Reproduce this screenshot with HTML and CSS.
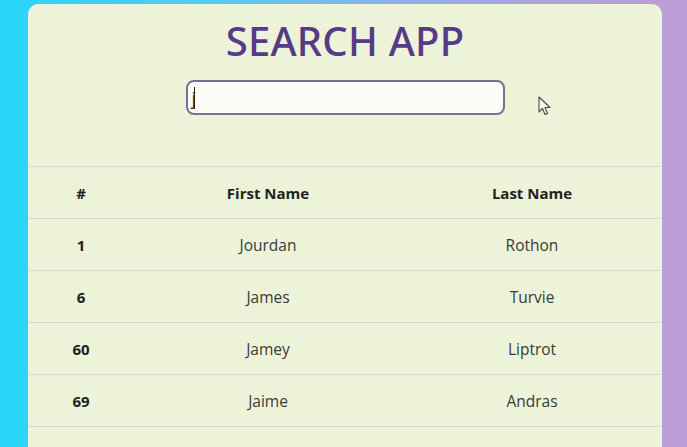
FILE: index.html
```html
<!DOCTYPE html>
<html>
<head>
<meta charset="utf-8">
<link rel="stylesheet" href="styles.css">
</head>
<body>
<div class="page">
  <div class="card">
    <h1 class="title">SEARCH APP</h1>
    <div class="search-row">
      <div class="search-box"><span class="typed">j</span><span class="caret"></span></div>
    </div>
    <table class="users">
      <thead>
        <tr><th class="c-id">#</th><th class="c-first">First Name</th><th class="c-last">Last Name</th></tr>
      </thead>
      <tbody>
        <tr><td class="num">1</td><td>Jourdan</td><td>Rothon</td></tr>
        <tr><td class="num">6</td><td>James</td><td>Turvie</td></tr>
        <tr><td class="num">60</td><td>Jamey</td><td>Liptrot</td></tr>
        <tr><td class="num">69</td><td>Jaime</td><td>Andras</td></tr>
        <tr><td class="num">74</td><td>Jarrad</td><td>Willis</td></tr>
      </tbody>
    </table>
  </div>
</div>
<svg class="cursor" width="14" height="20" viewBox="0 0 14 20">
  <path d="M1 1 L1 16 L4.5 12.5 L7 18.5 L9.5 17.5 L7 11.5 L12 11.5 Z" fill="#f4f4f0" stroke="#4a4a4a" stroke-width="1.1" stroke-linejoin="round"/>
</svg>
</body>
</html>
```
FILE: styles.css
```css
html, body {
  margin: 0;
  height: 447px;
  overflow: hidden;
}
body {
  background: linear-gradient(to right, #27d6f8 0%, #5fc8ee 35%, #a3a6e0 70%, #bd9dd6 100%);
  font-family: "Open Sans", "Noto Sans", sans-serif;
  position: relative;
}
.page {
  padding: 4px 25px 0 28px;
}
.card {
  background: #edf3d9;
  border-radius: 10px;
  padding-top: 13px;
  min-height: 600px;
}
.title {
  margin: 0;
  text-align: center;
  font-family: "Noto Sans", "Open Sans", sans-serif;
  font-size: 40px;
  font-weight: 500;
  line-height: 48px;
  color: #573a87;
  letter-spacing: 0.2px;
}
.search-row {
  display: flex;
  justify-content: center;
  margin-top: 15px;
}
.search-box {
  width: 311px;
  height: 31px;
  border: 2px solid #7a7093;
  border-radius: 8px;
  background: #fbfbf7;
  display: flex;
  align-items: center;
  padding-left: 4px;
  font-size: 18px;
  color: #333;
}
.typed {
  line-height: 22px;
}
.caret {
  width: 1px;
  height: 22px;
  background: #222;
  margin-left: -2px;
}
.users {
  width: 100%;
  border-collapse: collapse;
  margin-top: 51px;
  font-size: 15px;
  text-align: center;
}
.users th, .users td {
  height: 51px;
  border-top: 1px solid #d8dccf;
  padding: 0;
}
.users th {
  font-weight: 700;
  color: #222;
}
.users td {
  color: #3a3a3a;
  font-size: 15.5px;
}
.users td.num {
  font-weight: 700;
  color: #222;
  font-size: 15px;
}
.c-id { width: 106px; }
.c-first { width: 268px; }
.cursor {
  position: absolute;
  left: 538px;
  top: 96px;
}
```
